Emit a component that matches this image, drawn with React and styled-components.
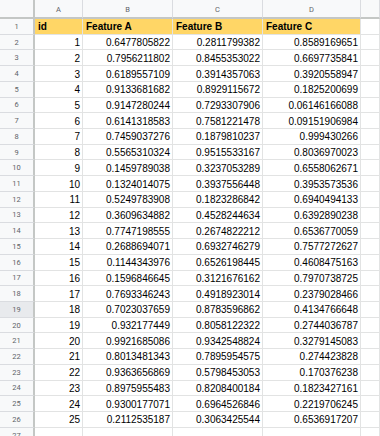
import React from 'react';
import styled, { createGlobalStyle } from 'styled-components';

const GlobalStyle = createGlobalStyle`
  html, body {
    margin: 0;
    padding: 0;
    background: #fff;
  }
  body {
    font-family: "Liberation Sans", Arial, sans-serif;
  }
`;

const ROWS = [
  ['1', '0.6477805822', '0.2811799382', '0.8589169651'],
  ['2', '0.7956211802', '0.8455353022', '0.6697735841'],
  ['3', '0.6189557109', '0.3914357063', '0.3920558947'],
  ['4', '0.9133681682', '0.8929115672', '0.1825200699'],
  ['5', '0.9147280244', '0.7293307906', '0.06146166088'],
  ['6', '0.6141318583', '0.7581221478', '0.09151906984'],
  ['7', '0.7459037276', '0.1879810237', '0.999430266'],
  ['8', '0.5565310324', '0.9515533167', '0.8036970023'],
  ['9', '0.1459789038', '0.3237053289', '0.6558062671'],
  ['10', '0.1324014075', '0.3937556448', '0.3953573536'],
  ['11', '0.5249783908', '0.1823286842', '0.6940494133'],
  ['12', '0.3609634882', '0.4528244634', '0.6392890238'],
  ['13', '0.7747198555', '0.2674822212', '0.6536770059'],
  ['14', '0.2688694071', '0.6932746279', '0.7577272627'],
  ['15', '0.1144343976', '0.6526198445', '0.4608475163'],
  ['16', '0.1596846645', '0.3121676162', '0.7970738725'],
  ['17', '0.7693346243', '0.4918923014', '0.2379028466'],
  ['18', '0.7023037659', '0.8783596862', '0.4134766648'],
  ['19', '0.932177449', '0.8058122322', '0.2744036787'],
  ['20', '0.9921685086', '0.9342548824', '0.3279145083'],
  ['21', '0.8013481343', '0.7895954575', '0.274423828'],
  ['22', '0.9363656869', '0.5798453053', '0.170376238'],
  ['23', '0.8975955483', '0.8208400184', '0.1823427161'],
  ['24', '0.9300177071', '0.6964526846', '0.2219706245'],
  ['25', '0.2112535187', '0.3063425544', '0.6536917207'],
];

const COLS = ['A', 'B', 'C', 'D', ''];
const HEADINGS = ['id', 'Feature A', 'Feature B', 'Feature C', ''];

const Sheet = styled.div`
  display: grid;
  grid-template-columns: 35px 48px 90px 90px 98px 1fr;
  grid-template-rows: 19px repeat(27, 15.72px);
  width: 380px;
  height: 436px;
  overflow: hidden;
`;

const Corner = styled.div`
  background: #f8f9fa;
  border-right: 2px solid #c4c7c5;
  border-bottom: 2px solid #c4c7c5;
`;

const ColHead = styled.div`
  display: flex;
  align-items: center;
  justify-content: center;
  background: #f8f9fa;
  border-right: 1px solid #dadce0;
  border-bottom: 2px solid #c4c7c5;
  font-family: "Roboto", "Liberation Sans", sans-serif;
  font-size: 7.5px;
  color: #5f6368;
  padding-top: 1px;
`;

const RowHead = styled.div`
  display: flex;
  align-items: center;
  justify-content: center;
  background: ${p => (p.$active ? '#e8eaed' : '#f8f9fa')};
  border-right: 2px solid #c4c7c5;
  border-bottom: 1px solid #dadce0;
  font-family: "Roboto", "Liberation Sans", sans-serif;
  font-size: 7.5px;
  color: #5f6368;
`;

const Cell = styled.div`
  display: flex;
  align-items: center;
  justify-content: ${p => (p.$num ? 'flex-end' : 'flex-start')};
  padding: 1px 2px 0 3px;
  background: ${p => (p.$head ? '#ffd666' : '#fff')};
  border-right: 1px solid #e2e3e3;
  border-bottom: 1px solid #e2e3e3;
  font-size: 10px;
  font-weight: ${p => (p.$head ? 700 : 400)};
  color: #000;
  white-space: nowrap;
  overflow: hidden;
  box-sizing: border-box;
`;

export default function App() {
  return (
    <>
      <GlobalStyle />
      <Sheet>
        <Corner />
        {COLS.map((c, i) => (
          <ColHead key={'c' + i}>{c}</ColHead>
        ))}

        <RowHead>1</RowHead>
        {HEADINGS.map((h, i) => (
          <Cell key={'h' + i} $head={i < 4}>{h}</Cell>
        ))}

        {ROWS.map((row, r) => (
          <React.Fragment key={r}>
            <RowHead $active={r + 2 === 19}>{r + 2}</RowHead>
            {row.map((v, i) => (
              <Cell key={i} $num>{v}</Cell>
            ))}
            <Cell />
          </React.Fragment>
        ))}

        <RowHead>27</RowHead>
        {COLS.map((_, i) => (
          <Cell key={'e' + i} />
        ))}
      </Sheet>
    </>
  );
}
